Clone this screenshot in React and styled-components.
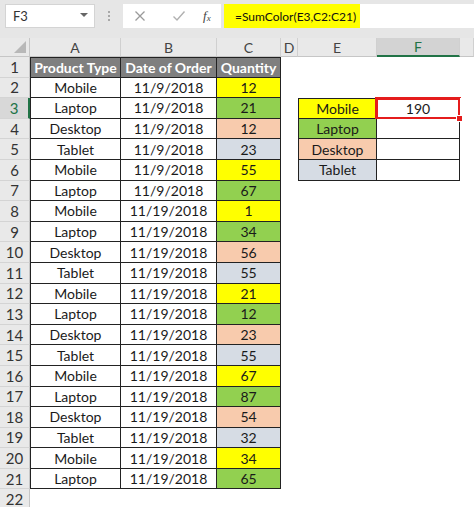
import React from "react";
import styled, { createGlobalStyle, css } from "styled-components";

const GlobalStyle = createGlobalStyle`
  html, body {
    margin: 0;
    padding: 0;
    background: #ffffff;
    font-family: "Lato", "Liberation Sans", sans-serif;
    overflow: hidden;
  }
`;

const YELLOW = "#ffff00";
const GREEN = "#92d050";
const PEACH = "#f8cbad";
const BLUE = "#d6dce4";

const fills = {
  Mobile: YELLOW,
  Laptop: GREEN,
  Desktop: PEACH,
  Tablet: BLUE,
};

const rows = [
  ["Mobile", "11/9/2018", 12],
  ["Laptop", "11/9/2018", 21],
  ["Desktop", "11/9/2018", 12],
  ["Tablet", "11/9/2018", 23],
  ["Mobile", "11/9/2018", 55],
  ["Laptop", "11/9/2018", 67],
  ["Mobile", "11/19/2018", 1],
  ["Laptop", "11/19/2018", 34],
  ["Desktop", "11/19/2018", 56],
  ["Tablet", "11/19/2018", 55],
  ["Mobile", "11/19/2018", 21],
  ["Laptop", "11/19/2018", 12],
  ["Desktop", "11/19/2018", 23],
  ["Tablet", "11/19/2018", 55],
  ["Mobile", "11/19/2018", 67],
  ["Laptop", "11/19/2018", 87],
  ["Desktop", "11/19/2018", 54],
  ["Tablet", "11/19/2018", 32],
  ["Mobile", "11/19/2018", 34],
  ["Laptop", "11/19/2018", 65],
];

const summary = ["Mobile", "Laptop", "Desktop", "Tablet"];
const columns = ["A", "B", "C", "D", "E", "F", ""];

export default function App() {
  const sheetRows = [];
  for (let r = 1; r <= 22; r++) {
    const cells = [];
    let a = null, b = null, c = null;
    if (r === 1) {
      a = "Product Type";
      b = "Date of Order";
      c = "Quantity";
    } else if (r <= 21) {
      [a, b, c] = rows[r - 2];
    }
    const inTable = r <= 21;
    const sumIdx = r - 3;
    const inSummary = sumIdx >= 0 && sumIdx < 4;

    cells.push(
      <RowHead key={"h" + r} $active={r === 3}>
        {r}
      </RowHead>
    );
    if (inTable) {
      const head = r === 1;
      cells.push(
        <Cell key={"a" + r} $table $bl $bt={head} $head={head}>{a}</Cell>,
        <Cell key={"b" + r} $table $bt={head} $head={head}>{b}</Cell>,
        <Cell
          key={"c" + r}
          $table
          $bt={head}
          $head={head}
          $fill={head ? undefined : fills[a]}
        >
          {c}
        </Cell>
      );
    } else {
      cells.push(<Cell key={"a" + r} />, <Cell key={"b" + r} />, <Cell key={"c" + r} />);
    }
    cells.push(<Cell key={"d" + r} />);
    if (inSummary) {
      const name = summary[sumIdx];
      cells.push(
        <Cell key={"e" + r} $table $bl $bt={sumIdx === 0} $fill={fills[name]}>
          {name}
        </Cell>,
        <Cell key={"f" + r} $table $bt={sumIdx === 0} $selected={sumIdx === 0}>
          {sumIdx === 0 ? "190" : null}
        </Cell>
      );
    } else {
      cells.push(<Cell key={"e" + r} />, <Cell key={"f" + r} />);
    }
    cells.push(<Cell key={"g" + r} />);
    sheetRows.push(cells);
  }

  return (
    <>
      <GlobalStyle />
      <Toolbar>
        <NameBox>
          <span>F3</span>
          <DropArrow />
        </NameBox>
        <Grip>
          <i />
          <i />
          <i />
        </Grip>
        <ButtonBox>
          <IconSlot>
            <svg width="12" height="12" viewBox="0 0 12 12">
              <path d="M1.5 1.5 L10.5 10.5 M10.5 1.5 L1.5 10.5" stroke="#9a9a9a" strokeWidth="1.3" fill="none" />
            </svg>
          </IconSlot>
          <IconSlot>
            <svg width="14" height="12" viewBox="0 0 14 12">
              <path d="M1.5 6.5 L5 10 L12.5 1.5" stroke="#b0b0b0" strokeWidth="1.4" fill="none" />
            </svg>
          </IconSlot>
          <FxLabel>
            f<sub>x</sub>
          </FxLabel>
        </ButtonBox>
        <FormulaInput>
          <Highlight>=SumColor(E3,C2:C21)</Highlight>
        </FormulaInput>
      </Toolbar>
      <Sheet>
        <Corner />
        {columns.map((col) => (
          <ColHead key={"col" + col} $active={col === "F"}>
            {col}
          </ColHead>
        ))}
        {sheetRows}
      </Sheet>
    </>
  );
}

const Toolbar = styled.div`
  display: flex;
  align-items: stretch;
  height: 24px;
  padding: 4px 0 10px 5px;
  background: #e6e6e6;
`;

const NameBox = styled.div`
  width: 90px;
  box-sizing: border-box;
  background: #ffffff;
  border: 1px solid #d4d4d4;
  display: flex;
  align-items: center;
  justify-content: space-between;
  padding: 0 6px 0 7px;
  font-size: 13px;
  color: #333;
`;

const DropArrow = styled.span`
  width: 0;
  height: 0;
  border-left: 4px solid transparent;
  border-right: 4px solid transparent;
  border-top: 4px solid #666;
  margin-top: -3px;
`;

const Grip = styled.div`
  width: 28px;
  display: flex;
  flex-direction: column;
  align-items: center;
  justify-content: center;
  gap: 2px;

  i {
    width: 2px;
    height: 2px;
    background: #a8a8a8;
    display: block;
  }
`;

const ButtonBox = styled.div`
  width: 98px;
  background: #ffffff;
  display: flex;
  align-items: center;
  padding-left: 11px;
  box-sizing: border-box;
`;

const IconSlot = styled.span`
  width: 30px;
  display: flex;
  align-items: center;
  justify-content: center;
  &:first-child {
    width: 12px;
    margin-right: 18px;
  }
`;

const FxLabel = styled.span`
  margin-left: 9px;
  font-family: "Liberation Serif", serif;
  font-style: italic;
  font-size: 13px;
  color: #444;

  sub {
    font-size: 9px;
    vertical-align: baseline;
    position: relative;
    top: 1px;
  }
`;

const FormulaInput = styled.div`
  flex: 1;
  margin-left: 3px;
  background: #ffffff;
  display: flex;
`;

const Highlight = styled.div`
  width: 136px;
  box-sizing: border-box;
  background: ${YELLOW};
  padding-left: 11px;
  display: flex;
  align-items: center;
  font-size: 12px;
  color: #111;
`;

const Sheet = styled.div`
  display: grid;
  grid-template-columns: 30px 91px 96px 64px 17px 79px 83px 1fr;
  grid-template-rows: 19px;
  grid-auto-rows: 20.6px;
`;

const headerBase = css`
  background: #e9e9e9;
  box-sizing: border-box;
  display: flex;
  align-items: center;
  justify-content: center;
  color: #444;
  font-size: 14px;
`;

const Corner = styled.div`
  ${headerBase};
  border-right: 1px solid #c6c6c6;
  border-bottom: 1px solid #c6c6c6;
  position: relative;

  &::after {
    content: "";
    position: absolute;
    right: 3px;
    bottom: 3px;
    border-left: 12px solid transparent;
    border-bottom: 12px solid #b8b8b8;
  }
`;

const ColHead = styled.div`
  ${headerBase};
  border-right: 1px solid #d0d0d0;
  border-bottom: 1px solid #c6c6c6;
  ${(p) =>
    p.$active &&
    css`
      background: #d3d3d3;
      color: #217346;
      border-bottom: 2px solid #217346;
    `}
`;

const RowHead = styled.div`
  ${headerBase};
  font-size: 15px;
  color: #333;
  border-right: 1px solid #c6c6c6;
  border-bottom: 1px solid #d4d4d4;
  ${(p) =>
    p.$active &&
    css`
      background: #d8d8d8;
      color: #217346;
      border-right: 2px solid #217346;
    `}
`;

const Cell = styled.div`
  box-sizing: border-box;
  display: flex;
  align-items: center;
  justify-content: center;
  font-size: 14px;
  color: #1a1a1a;
  white-space: nowrap;
  position: relative;
  background: ${(p) => p.$fill || "#ffffff"};
  ${(p) =>
    p.$table &&
    css`
      border-right: 1px solid #222;
      border-bottom: 1px solid #222;
    `}
  ${(p) => p.$bl && "border-left: 1px solid #222;"}
  ${(p) => p.$bt && "border-top: 1px solid #222;"}
  ${(p) =>
    p.$head &&
    css`
      background: #7f7f7f;
      color: #ffffff;
      font-weight: 700;
    `}
  ${(p) =>
    p.$selected &&
    css`
      &::after {
        content: "";
        position: absolute;
        inset: -2px;
        border: 3px solid #e51c1c;
      }
      &::before {
        content: "";
        position: absolute;
        right: -4px;
        bottom: -4px;
        width: 5px;
        height: 5px;
        background: #e51c1c;
        border: 1px solid #ffffff;
        z-index: 1;
      }
    `}
`;
